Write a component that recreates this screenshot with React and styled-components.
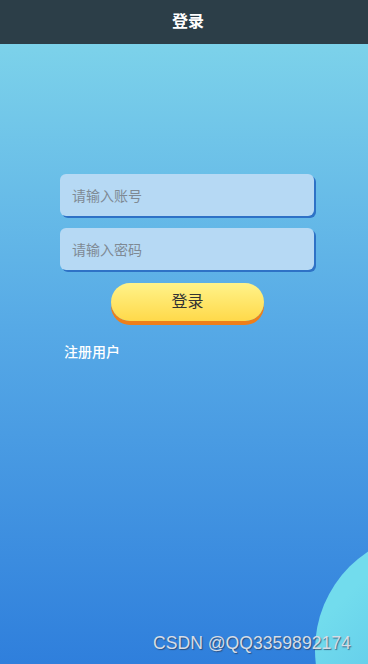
import React from 'react';
import styled, { createGlobalStyle } from 'styled-components';

const Global = createGlobalStyle`
html, body {
  margin: 0;
  padding: 0;
}
body {
  font-family: "Noto Sans CJK SC", "Liberation Sans", sans-serif;
}
* { box-sizing: border-box; }
`;

const Page = styled.div`
position: relative;
width: 368px;
height: 664px;
overflow: hidden;
background: linear-gradient(180deg, #7cd2ea 44px, #56a9e6 330px, #2f7fdc 664px);
`;

const Header = styled.div`
height: 44px;
background: #2c3e48;
color: #fff;
font-size: 16px;
font-weight: 700;
display: flex;
align-items: center;
justify-content: center;
padding: 0 0 5px 8px;
`;

const Form = styled.div`
margin: 130px 53px 0 60px;
display: flex;
flex-direction: column;
`;

const Input = styled.input`
width: 254px;
height: 42px;
border: none;
outline: none;
border-radius: 6px;
background: #b6d9f4;
box-shadow: 2px 2px 0 #2e72c6;
padding: 0 12px;
margin-bottom: ${p => p.$gap || 12}px;
font-family: "Noto Sans CJK SC", sans-serif;
font-size: 14px;
color: #333;
&::placeholder { color: #7f8a94; }
`;

const Button = styled.button`
align-self: center;
width: 153px;
height: 38px;
margin: 0;
padding: 0 0 4px 0;
border: none;
border-radius: 19px;
background: linear-gradient(180deg, #fff38a, #ffd94a);
box-shadow: 0 4px 0 #ef7f1a;
font-family: "Noto Sans CJK SC", sans-serif;
font-size: 16px;
color: #333;
`;

const Register = styled.div`
margin: 20px 0 0 4px;
color: #fff;
font-size: 14px;
font-weight: 500;
`;

const Bubble = styled.div`
position: absolute;
left: 315px;
top: 532px;
width: 236px;
height: 236px;
border-radius: 50%;
background: linear-gradient(135deg, #72dced 20%, #55bde8 70%);
`;

const Watermark = styled.div`
position: absolute;
left: 153px;
top: 633px;
font-family: "Liberation Sans", sans-serif;
font-size: 17.6px;
color: #d6dde6;
text-shadow: 1px 1px 1px rgba(40, 60, 90, 0.7);
`;

export default function App() {
  return (
    <Page>
      <Global />
      <Header>登录</Header>
      <Form>
        <Input placeholder="请输入账号" />
        <Input placeholder="请输入密码" type="password" $gap={13} />
        <Button>登录</Button>
        <Register>注册用户</Register>
      </Form>
      <Bubble />
      <Watermark>CSDN @QQ3359892174</Watermark>
    </Page>
  );
}
